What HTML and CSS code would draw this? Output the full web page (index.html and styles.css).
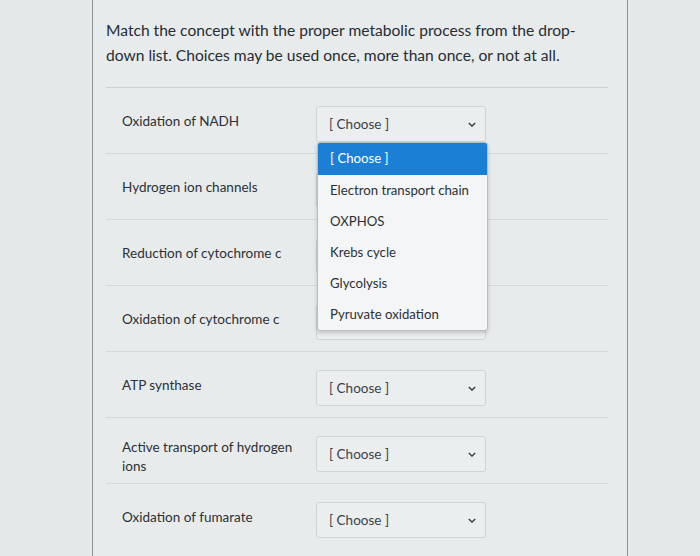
FILE: index.html
```html
<!DOCTYPE html>
<html>
<head>
<meta charset="utf-8">
<link rel="stylesheet" href="styles.css">
</head>
<body>
<div class="card">
  <p class="question">Match the concept with the proper metabolic process from the drop-down list. Choices may be used once, more than once, or not at all.</p>
  <div class="rows">
    <div class="row">
      <div class="label">Oxidation of NADH</div>
      <div class="select-wrap">
        <div class="select open"><span>[ Choose ]</span><svg class="chev" viewBox="0 0 10 6"><path d="M1 1 L5 5 L9 1"/></svg></div>
        <ul class="menu">
          <li class="active">[ Choose ]</li>
          <li>Electron transport chain</li>
          <li>OXPHOS</li>
          <li>Krebs cycle</li>
          <li>Glycolysis</li>
          <li>Pyruvate oxidation</li>
        </ul>
      </div>
    </div>
    <div class="row">
      <div class="label">Hydrogen ion channels</div>
      <div class="select-wrap"><div class="select covered"><span>[ Choose ]</span><svg class="chev" viewBox="0 0 10 6"><path d="M1 1 L5 5 L9 1"/></svg></div></div>
    </div>
    <div class="row">
      <div class="label">Reduction of cytochrome c</div>
      <div class="select-wrap"><div class="select covered"><span>[ Choose ]</span><svg class="chev" viewBox="0 0 10 6"><path d="M1 1 L5 5 L9 1"/></svg></div></div>
    </div>
    <div class="row">
      <div class="label">Oxidation of cytochrome c</div>
      <div class="select-wrap"><div class="select covered"><span>[ Choose ]</span><svg class="chev" viewBox="0 0 10 6"><path d="M1 1 L5 5 L9 1"/></svg></div></div>
    </div>
    <div class="row">
      <div class="label">ATP synthase</div>
      <div class="select-wrap"><div class="select"><span>[ Choose ]</span><svg class="chev" viewBox="0 0 10 6"><path d="M1 1 L5 5 L9 1"/></svg></div></div>
    </div>
    <div class="row">
      <div class="label two">Active transport of hydrogen ions</div>
      <div class="select-wrap"><div class="select"><span>[ Choose ]</span><svg class="chev" viewBox="0 0 10 6"><path d="M1 1 L5 5 L9 1"/></svg></div></div>
    </div>
    <div class="row last">
      <div class="label">Oxidation of fumarate</div>
      <div class="select-wrap"><div class="select"><span>[ Choose ]</span><svg class="chev" viewBox="0 0 10 6"><path d="M1 1 L5 5 L9 1"/></svg></div></div>
    </div>
  </div>
</div>
</body>
</html>
```
FILE: styles.css
```css
* { box-sizing: border-box; }
html, body { margin: 0; padding: 0; }
body {
  width: 700px;
  height: 556px;
  overflow: hidden;
  background: #e3e8e9;
  font-family: Lato, "Open Sans", sans-serif;
  color: #2d3b45;
}
.card {
  margin-left: 92px;
  width: 536px;
  height: 556px;
  border-left: 1px solid #8c9396;
  border-right: 1px solid #8c9396;
  background: #e8ebec;
  padding: 18px 19px 0 13px;
}
.question {
  margin: 0;
  width: 490px;
  font-size: 15.6px;
  line-height: 25px;
  color: #262d33;
}
.rows {
  margin-top: 19px;
  border-top: 1px solid #cdd1d3;
}
.row {
  display: flex;
  height: 66px;
  border-bottom: 1px solid #d3d7d8;
  padding-top: 18px;
  align-items: flex-start;
}
.row.last { border-bottom: none; }
.label {
  width: 210px;
  padding-left: 16px;
  padding-top: 6px;
  font-size: 13.5px;
  line-height: 19px;
  color: #2b3136;
}
.label.two { padding-top: 2px; padding-right: 12px; }
.select-wrap {
  position: relative;
  width: 170px;
}
.select {
  height: 36px;
  border: 1px solid #cfd3d5;
  border-radius: 3px;
  background: #ebeeef;
  display: flex;
  align-items: center;
  padding: 0 9px 0 12px;
  font-size: 13.5px;
  color: #3a4248;
}
.select span { flex: 1; }
.select.covered span,
.select.covered .chev { visibility: hidden; }
.chev {
  width: 8px;
  height: 5px;
  fill: none;
  stroke: #3c444a;
  stroke-width: 1.8;
}
.menu {
  position: absolute;
  top: 36px;
  left: 1px;
  width: 171px;
  margin: 0;
  padding: 0;
  list-style: none;
  background: #f4f5f6;
  border: 1px solid #b9bec1;
  border-radius: 3px;
  box-shadow: 0 2px 4px rgba(0,0,0,0.18);
  overflow: hidden;
  z-index: 2;
}
.menu li {
  height: 31px;
  line-height: 31px;
  padding-left: 12px;
  font-size: 13.2px;
  color: #2b3136;
}
.menu li.active {
  background: #1c7fd6;
  color: #ffffff;
  height: 32px;
}
```
